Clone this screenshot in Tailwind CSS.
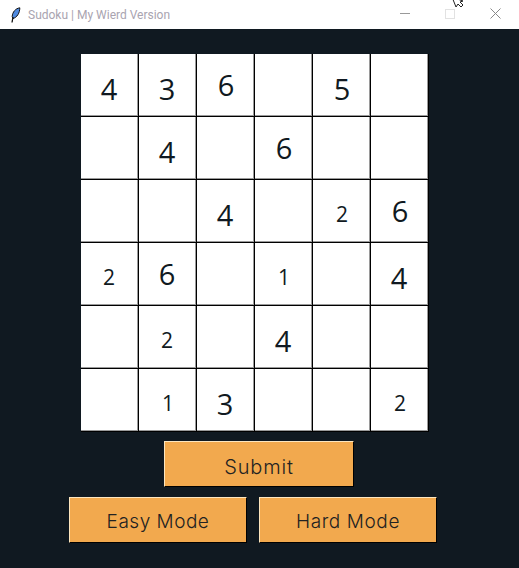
<!DOCTYPE html>
<html lang="en">
<head>
  <meta charset="UTF-8" />
  <title>Sudoku | My Wierd Version</title>
  <script src="https://cdn.jsdelivr.net/npm/@tailwindcss/browser@4"></script>
</head>
<body class="w-[519px] h-[568px] overflow-hidden bg-[#101921] font-['Open_Sans',sans-serif]">
  <!-- title bar -->
  <div class="h-[29px] bg-white flex items-center relative">
    <svg class="ml-[10px] w-[11px] h-[16px]" viewBox="0 0 11 16">
      <path d="M9.800 .8C5.500 1.500 2.500 5 2.200 9.500L3 11.500C7 10.500 9.800 6 9.800 .8Z" fill="#4f8ae0" stroke="#111" stroke-width="1"/>
      <path d="M3 10L2 15.500" stroke="#111" stroke-width="1.300"/>
    </svg>
    <span class="ml-[7px] text-[12px] text-[#a9a4b0] font-['Roboto',sans-serif]">Sudoku | My Wierd Version</span>
    <svg class="absolute left-[400px] top-[9px] w-[11px] h-[11px]" viewBox="0 0 11 11"><path d="M0 4.500H10" stroke="#999" /></svg>
    <div class="absolute left-[445px] top-[9px] w-[10px] h-[10px] border border-[#e2e2e2]"></div>
    <svg class="absolute left-[490px] top-[8px] w-[11px] h-[11px]" viewBox="0 0 11 11"><path d="M.5 .5L10.500 10.500M10.500 .5L.5 10.500" stroke="#888" /></svg>
    <svg class="absolute left-[451px] top-0 w-[14px] h-[9px]" viewBox="0 0 14 9"><path d="M1 -3L5 7L7 4L10 7L12 5L9 2L12 1Z" fill="#fff" stroke="#222" /></svg>
  </div>

  <div class="flex flex-col items-start">
    <!-- board -->
    <div class="mt-[25px] ml-[81px] pr-px pb-px grid grid-cols-[repeat(6,57px)] grid-rows-[repeat(6,62px)] gap-px bg-black text-[#101921]">
      <div class="bg-white border-r border-b border-[#9a9a9a] flex items-center justify-center"><span class="text-[29px] mt-[8px]">4</span></div>
      <div class="bg-white border-r border-b border-[#9a9a9a] flex items-center justify-center"><span class="text-[29px] mt-[8px]">3</span></div>
      <div class="bg-white border-r border-b border-[#9a9a9a] flex items-center justify-center"><span class="text-[29px] mt-[1px] ml-[2px]">6</span></div>
      <div class="bg-white border-r border-b border-[#9a9a9a]"></div>
      <div class="bg-white border-r border-b border-[#9a9a9a] flex items-center justify-center"><span class="text-[29px] mt-[8px] ml-[2px]">5</span></div>
      <div class="bg-white border-r border-b border-[#9a9a9a]"></div>

      <div class="bg-white border-r border-b border-[#9a9a9a]"></div>
      <div class="bg-white border-r border-b border-[#9a9a9a] flex items-center justify-center"><span class="text-[29px] mt-[8px]">4</span></div>
      <div class="bg-white border-r border-b border-[#9a9a9a]"></div>
      <div class="bg-white border-r border-b border-[#9a9a9a] flex items-center justify-center"><span class="text-[29px] mt-[1px] ml-[2px]">6</span></div>
      <div class="bg-white border-r border-b border-[#9a9a9a]"></div>
      <div class="bg-white border-r border-b border-[#9a9a9a]"></div>

      <div class="bg-white border-r border-b border-[#9a9a9a]"></div>
      <div class="bg-white border-r border-b border-[#9a9a9a]"></div>
      <div class="bg-white border-r border-b border-[#9a9a9a] flex items-center justify-center"><span class="text-[29px] mt-[8px]">4</span></div>
      <div class="bg-white border-r border-b border-[#9a9a9a]"></div>
      <div class="bg-white border-r border-b border-[#9a9a9a] flex items-center justify-center"><span class="text-[21px] mt-[8px] ml-[2px]">2</span></div>
      <div class="bg-white border-r border-b border-[#9a9a9a] flex items-center justify-center"><span class="text-[29px] mt-[1px] ml-[2px]">6</span></div>

      <div class="bg-white border-r border-b border-[#9a9a9a] flex items-center justify-center"><span class="text-[21px] mt-[8px]">2</span></div>
      <div class="bg-white border-r border-b border-[#9a9a9a] flex items-center justify-center"><span class="text-[29px] mt-[1px]">6</span></div>
      <div class="bg-white border-r border-b border-[#9a9a9a]"></div>
      <div class="bg-white border-r border-b border-[#9a9a9a] flex items-center justify-center"><span class="text-[21px] mt-[8px] ml-[2px]">1</span></div>
      <div class="bg-white border-r border-b border-[#9a9a9a]"></div>
      <div class="bg-white border-r border-b border-[#9a9a9a] flex items-center justify-center"><span class="text-[29px] mt-[8px]">4</span></div>

      <div class="bg-white border-r border-b border-[#9a9a9a]"></div>
      <div class="bg-white border-r border-b border-[#9a9a9a] flex items-center justify-center"><span class="text-[21px] mt-[8px]">2</span></div>
      <div class="bg-white border-r border-b border-[#9a9a9a]"></div>
      <div class="bg-white border-r border-b border-[#9a9a9a] flex items-center justify-center"><span class="text-[29px] mt-[8px]">4</span></div>
      <div class="bg-white border-r border-b border-[#9a9a9a]"></div>
      <div class="bg-white border-r border-b border-[#9a9a9a]"></div>

      <div class="bg-white border-r border-b border-[#9a9a9a]"></div>
      <div class="bg-white border-r border-b border-[#9a9a9a] flex items-center justify-center"><span class="text-[21px] mt-[8px] ml-[2px]">1</span></div>
      <div class="bg-white border-r border-b border-[#9a9a9a] flex items-center justify-center"><span class="text-[29px] mt-[8px]">3</span></div>
      <div class="bg-white border-r border-b border-[#9a9a9a]"></div>
      <div class="bg-white border-r border-b border-[#9a9a9a]"></div>
      <div class="bg-white border-r border-b border-[#9a9a9a] flex items-center justify-center"><span class="text-[21px] mt-[8px] ml-[2px]">2</span></div>
    </div>

    <!-- buttons -->
    <button class="mt-[9px] ml-[164px] w-[190px] h-[46px] pt-[5px] bg-[#f2a94e] border border-t-[#fde6bf] border-l-[#fde6bf] border-r-black border-b-black text-[#222] text-[20px] font-light tracking-[0.8px] font-['Inter',sans-serif]">Submit</button>
    <div class="mt-[10px] ml-[69px] flex gap-[12px]">
      <button class="w-[178px] h-[46px] pt-[5px] bg-[#f2a94e] border border-t-[#fde6bf] border-l-[#fde6bf] border-r-black border-b-black text-[#222] text-[19px] font-light tracking-[0.5px] font-['Inter',sans-serif]">Easy Mode</button>
      <button class="w-[178px] h-[46px] pt-[5px] bg-[#f2a94e] border border-t-[#fde6bf] border-l-[#fde6bf] border-r-black border-b-black text-[#222] text-[19px] font-light tracking-[0.6px] font-['Inter',sans-serif]">Hard Mode</button>
    </div>
  </div>
</body>
</html>
